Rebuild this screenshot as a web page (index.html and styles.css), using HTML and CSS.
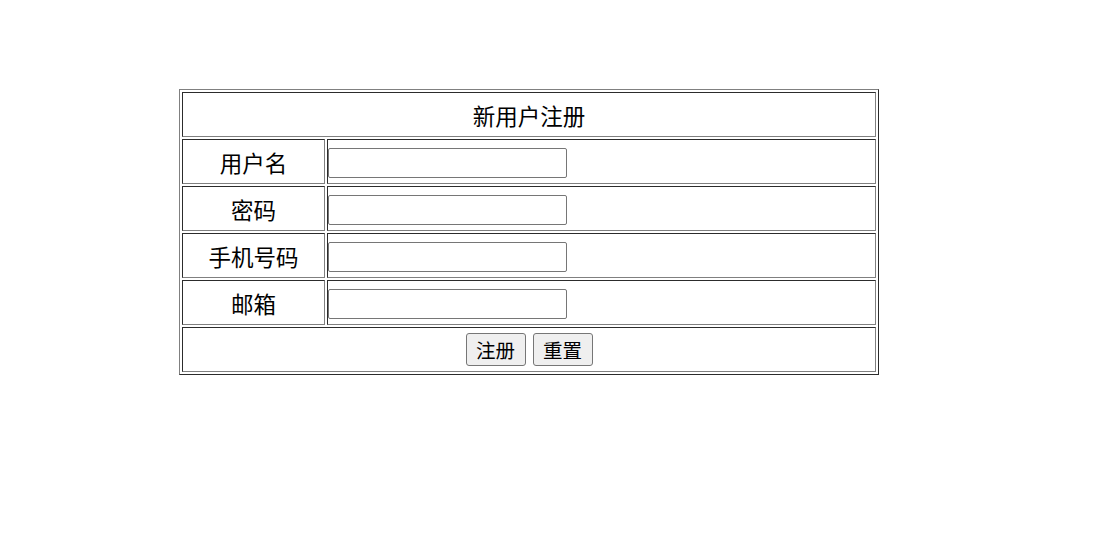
FILE: index.html
```html
<!DOCTYPE html>
<html lang="zh-CN">
<head>
<meta charset="utf-8">
<title>新用户注册</title>
<link rel="stylesheet" href="styles.css">
</head>
<body>
<form class="reg-form">
<table class="reg-table">
  <tr><td class="title" colspan="2">新用户注册</td></tr>
  <tr><td class="label">用户名</td><td class="field"><input class="text-input" type="text"></td></tr>
  <tr><td class="label">密码</td><td class="field"><input class="text-input" type="password"></td></tr>
  <tr><td class="label">手机号码</td><td class="field"><input class="text-input" type="text"></td></tr>
  <tr><td class="label">邮箱</td><td class="field"><input class="text-input" type="text"></td></tr>
  <tr><td class="actions" colspan="2"><button class="btn" type="submit">注册</button><button class="btn btn-second" type="reset">重置</button></td></tr>
</table>
</form>
</body>
</html>
```
FILE: styles.css
```css
html, body {
  margin: 0;
  padding: 0;
  background: #ffffff;
}
body {
  padding: 89px 0 0 179px;
  font-family: "Noto Sans CJK SC", "Microsoft YaHei", sans-serif;
  color: #000;
}
.reg-form {
  margin: 0;
}
.reg-table {
  width: 700px;
  border: 1px outset gray;
  border-spacing: 2px;
  border-collapse: separate;
  font-size: 22.5px;
}
.reg-table td {
  border: 1px inset gray;
  padding: 0;
  box-sizing: border-box;
  height: 45px;
  vertical-align: middle;
}
.title, .label, .actions {
  text-align: center;
  line-height: 28px;
}
.label {
  width: 143px;
}
.field {
  text-align: left;
}
.text-input {
  display: block;
  width: 239px;
  height: 30px;
  box-sizing: border-box;
  margin: 2px 0 0 0;
  border: 1px solid #767676;
  border-radius: 2px;
  padding: 1px 2px;
  font-size: 13px;
  background: #fff;
}
.actions {
  font-size: 0;
}
.btn {
  font-family: "Noto Sans CJK SC", "Microsoft YaHei", sans-serif;
  font-size: 19.5px;
  line-height: 27px;
  height: 33px;
  width: 60px;
  box-sizing: border-box;
  padding: 0;
  margin: -1px 0 0 0;
  border: 1px solid #767676;
  border-radius: 3px;
  background: #efefef;
  color: #000;
  vertical-align: middle;
}
.btn-second {
  margin-left: 7px;
}
```
